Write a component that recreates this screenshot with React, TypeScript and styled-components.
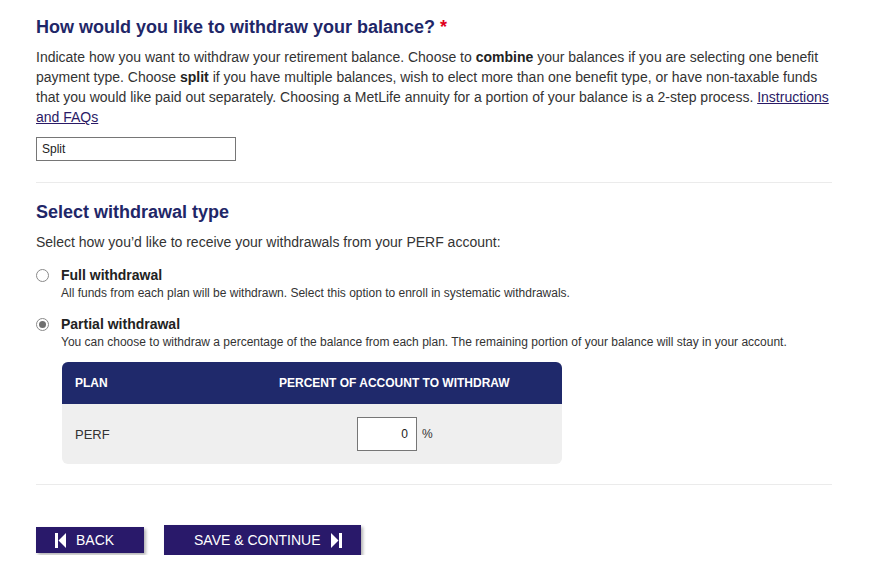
import React from "react";
import styled, { createGlobalStyle } from "styled-components";

const Global = createGlobalStyle`
  html, body { margin: 0; padding: 0; background: #fff; }
  body { font-family: "Liberation Sans", Arial, sans-serif; color: #333; }
`;

const Page = styled.div`
  width: 796px;
  padding: 16px 0 0 36px;
`;

const Heading = styled.h2`
  margin: 0;
  font-size: 18px;
  line-height: 22px;
  font-weight: bold;
  color: #1f2768;
`;

const Required = styled.span`
  color: #e0001b;
`;

const Para = styled.p<{ $top?: number }>`
  margin: ${(p) => p.$top ?? 10}px 0 0;
  font-size: 14px;
  line-height: 20px;
  color: #333;
  b { color: #222; }
  a { color: #2a1a66; text-decoration: underline; }
`;

const SelectBox = styled.div`
  margin-top: 10px;
  width: 200px;
  height: 24px;
  box-sizing: border-box;
  border: 1px solid #767676;
  font-size: 12px;
  line-height: 22px;
  padding-left: 5px;
  color: #222;
`;

const Divider = styled.hr<{ $top: number; $bottom: number }>`
  border: 0;
  border-top: 1px solid #ebebeb;
  margin: ${(p) => p.$top}px 0 ${(p) => p.$bottom}px;
`;

const Option = styled.div<{ $top: number }>`
  display: grid;
  grid-template-columns: 25px 1fr;
  margin-top: ${(p) => p.$top}px;
`;

const Radio = styled.span<{ $checked?: boolean }>`
  width: 11px;
  height: 11px;
  border: 1px solid #8a8a8a;
  border-radius: 50%;
  margin: 3px 0 0 0;
  display: flex;
  align-items: center;
  justify-content: center;
  background: #fff;
  &::after {
    content: "";
    width: 7px;
    height: 7px;
    border-radius: 50%;
    background: ${(p) => (p.$checked ? "#707070" : "transparent")};
  }
`;

const OptTitle = styled.div`
  font-size: 14px;
  font-weight: bold;
  line-height: 18px;
  color: #222;
`;

const OptDesc = styled.div`
  margin-top: 1px;
  font-size: 12px;
  line-height: 16px;
  color: #333;
`;

const Table = styled.div`
  margin: 12px 0 0 26px;
  width: 500px;
  border-radius: 6px;
  overflow: hidden;
  background: #efefef;
`;

const HeadRow = styled.div`
  display: grid;
  grid-template-columns: 204px 1fr;
  height: 42px;
  align-items: center;
  background: #1f296b;
  color: #fff;
  font-size: 12px;
  font-weight: bold;
  padding-left: 13px;
`;

const BodyRow = styled.div`
  display: grid;
  grid-template-columns: 282px 1fr;
  height: 60px;
  align-items: center;
  padding-left: 13px;
  font-size: 13px;
  color: #333;
`;

const PctCell = styled.div`
  display: flex;
  align-items: center;
  gap: 5px;
  font-size: 12px;
`;

const NumInput = styled.div`
  width: 50px;
  height: 32px;
  border: 1px solid #767676;
  background: #fff;
  text-align: right;
  padding-right: 8px;
  line-height: 32px;
  font-size: 12px;
  color: #222;
`;

const Buttons = styled.div`
  display: flex;
  align-items: center;
  gap: 20px;
`;

const Btn = styled.button<{ $w: number; $h: number; $pl: number }>`
  width: ${(p) => p.$w}px;
  height: ${(p) => p.$h}px;
  background: #29196a;
  color: #fff;
  border: 0;
  border-radius: 0;
  box-shadow: 2px 2px 3px rgba(0, 0, 0, 0.3);
  font-family: "Liberation Sans", Arial, sans-serif;
  font-size: 14px;
  display: flex;
  align-items: center;
  justify-content: flex-start;
  gap: 10px;
  padding: 0 0 0 ${(p) => p.$pl}px;
  cursor: pointer;
`;

const Icon = ({ dir }: { dir: "back" | "next" }) => (
  <svg width="11" height="15" viewBox="0 0 11 15">
    {dir === "back" ? (
      <>
        <rect x="0" y="0" width="3" height="15" fill="#fff" />
        <polygon points="11,0 11,15 3.5,7.5" fill="#fff" />
      </>
    ) : (
      <>
        <polygon points="0,0 0,15 7.5,7.5" fill="#fff" />
        <rect x="8" y="0" width="3" height="15" fill="#fff" />
      </>
    )}
  </svg>
);

export default function App() {
  return (
    <>
      <Global />
      <Page>
        <Heading>
          How would you like to withdraw your balance? <Required>*</Required>
        </Heading>
        <Para $top={9}>
          Indicate how you want to withdraw your retirement balance. Choose to <b>combine</b> your balances
          if you are selecting one benefit payment type. Choose <b>split</b> if you have multiple balances,
          wish to elect more than one benefit type, or have non-taxable funds that you would like paid out
          separately. Choosing a MetLife annuity for a portion of your balance is a 2-step process.{" "}
          <a href="#">Instructions and FAQs</a>
        </Para>
        <SelectBox>Split</SelectBox>
        <Divider $top={21} $bottom={18} />
        <Heading>Select withdrawal type</Heading>
        <Para $top={9}>Select how you’d like to receive your withdrawals from your PERF account:</Para>
        <Option $top={14}>
          <Radio />
          <div>
            <OptTitle>Full withdrawal</OptTitle>
            <OptDesc>All funds from each plan will be withdrawn. Select this option to enroll in systematic withdrawals.</OptDesc>
          </div>
        </Option>
        <Option $top={14}>
          <Radio $checked />
          <div>
            <OptTitle>Partial withdrawal</OptTitle>
            <OptDesc>
              You can choose to withdraw a percentage of the balance from each plan. The remaining portion of your
              balance will stay in your account.
            </OptDesc>
          </div>
        </Option>
        <Table>
          <HeadRow>
            <span>PLAN</span>
            <span>PERCENT OF ACCOUNT TO WITHDRAW</span>
          </HeadRow>
          <BodyRow>
            <span>PERF</span>
            <PctCell>
              <NumInput>0</NumInput>
              <span>%</span>
            </PctCell>
          </BodyRow>
        </Table>
        <Divider $top={20} $bottom={40} />
        <Buttons>
          <Btn $w={108} $h={26} $pl={19}>
            <Icon dir="back" />
            BACK
          </Btn>
          <Btn $w={197} $h={30} $pl={30}>
            SAVE &amp; CONTINUE
            <Icon dir="next" />
          </Btn>
        </Buttons>
      </Page>
    </>
  );
}
